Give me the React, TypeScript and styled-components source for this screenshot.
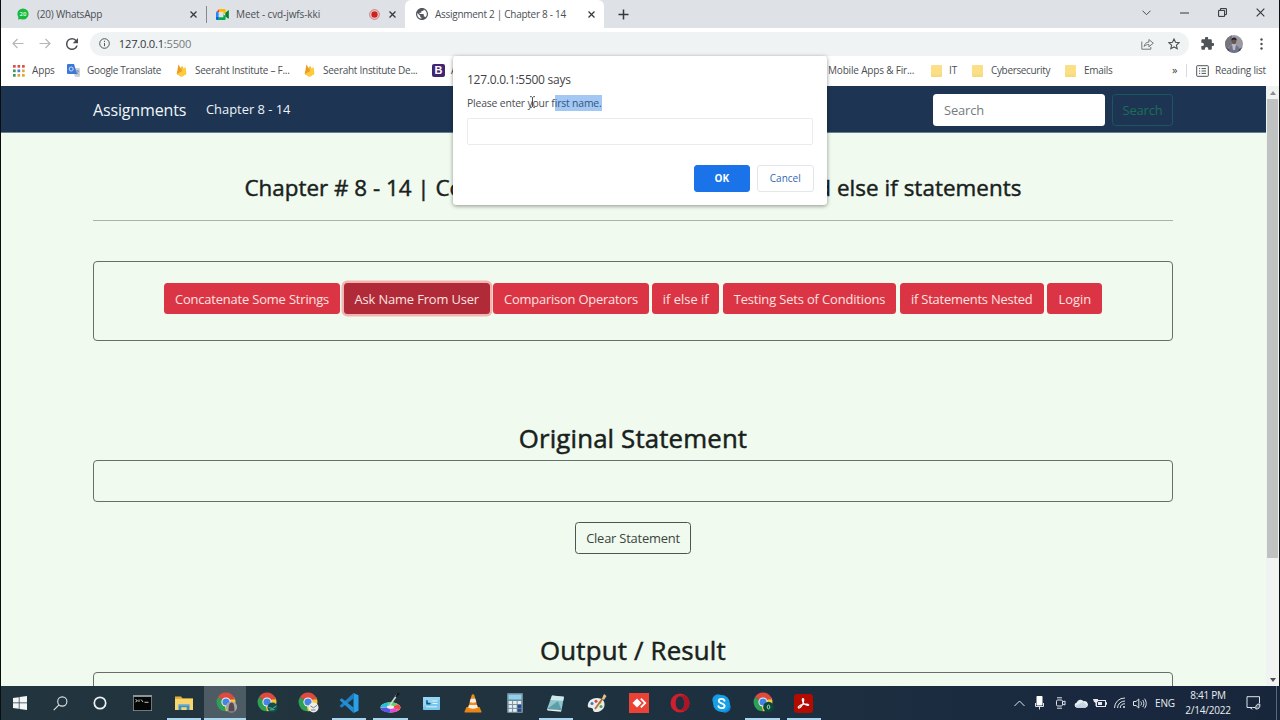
import React from 'react';
import styled, { createGlobalStyle, css } from 'styled-components';

const GlobalStyle = createGlobalStyle`
  *, *::before, *::after { box-sizing: border-box; }
  html, body { margin: 0; padding: 0; overflow: hidden; }
  body { font-family: 'Open Sans', 'Noto Sans', sans-serif; color: #212529; }
  svg { display: block; flex: none; }
`;

const Screen = styled.div`
  width: 1280px;
  height: 720px;
  display: flex;
  flex-direction: column;
  background: #fff;
  position: relative;
  overflow: hidden;
`;

const Window = styled.div`
  height: 686px;
  display: flex;
  flex-direction: column;
  border-left: 1px solid #0b0d0e;
  border-right: 1px solid #0b0d0e;
`;

const Label = styled.span<{ $size?: number; $track?: number; $color?: string; $weight?: number }>`
  font-size: ${p => p.$size ?? 10}px;
  letter-spacing: ${p => p.$track ?? 0}px;
  color: ${p => p.$color ?? '#4b4f54'};
  font-weight: ${p => p.$weight ?? 400};
  white-space: nowrap;
  line-height: 1.3;
`;

/* ---------- tab strip ---------- */
const TabStrip = styled.div`
  height: 28px;
  flex: none;
  display: flex;
  background: #dee1e6;
`;
const Tab = styled.div<{ $w: number; $active?: boolean; $pad: number; $divider?: boolean }>`
  width: ${p => p.$w}px;
  height: 28px;
  padding: 0 9px 0 ${p => p.$pad}px;
  display: flex;
  align-items: center;
  position: relative;
  ${p => p.$active && css`background: #fff; border-radius: 6px 6px 0 0;`}
  ${p => p.$divider && css`
    padding-right: 10px;
    &::after { content: ''; position: absolute; right: 0; top: 6px; height: 17px; width: 1px; background: #868a8f; }
  `}
`;
const TabTitle = styled(Label)<{ $gap: number }>`
  margin-left: ${p => p.$gap}px;
  flex: 1;
`;
const TabEnd = styled.span`
  display: flex;
  gap: 9px;
  align-items: center;
`;
const NewTab = styled.div`
  width: 38px;
  display: flex;
  align-items: center;
  justify-content: center;
`;
const WindowControls = styled.div`
  margin-left: auto;
  display: flex;
  height: 25px;
  align-items: center;
`;
const ControlCell = styled.span`
  width: 38px;
  display: flex;
  justify-content: center;
`;

/* ---------- toolbar ---------- */
const Toolbar = styled.div`
  height: 29px;
  flex: none;
  display: flex;
  align-items: center;
  padding-top: 2px;
  padding-left: 4px;
  background: #fff;
`;
const ToolCell = styled.span<{ $w?: number }>`
  width: ${p => p.$w ?? 27}px;
  display: flex;
  justify-content: center;
  align-items: center;
`;
const AddressBar = styled.div`
  width: 1101px;
  height: 24px;
  margin-left: 4px;
  padding: 0 9px;
  border-radius: 12px;
  background: #eff3f4;
  display: flex;
  align-items: center;
`;
const Url = styled(Label)`
  margin-left: 9px;
  padding-top: 1px;
  flex: 1;
  em { font-style: normal; color: #777b80; }
`;
const AddressActions = styled.span`
  display: flex;
  gap: 14px;
  align-items: center;
`;
const Avatar = styled.span`
  width: 18px;
  height: 18px;
  border-radius: 50%;
  overflow: hidden;
`;

/* ---------- bookmarks ---------- */
const Bookmarks = styled.div`
  height: 29px;
  flex: none;
  display: flex;
  align-items: center;
  padding-left: 12px;
  padding-bottom: 2px;
  background: #fff;
`;
const Bookmark = styled.span<{ $w: number; $gap?: number }>`
  width: ${p => p.$w}px;
  flex: none;
  display: flex;
  align-items: center;
  gap: ${p => p.$gap ?? 6}px;
  white-space: nowrap;
`;
const Folder = styled.i`
  width: 11px;
  height: 12px;
  border-radius: 1px;
  background: linear-gradient(180deg, #fbe08a, #fadf85 70%, #f3d67c);
`;
const BootMark = styled.i`
  width: 13px;
  height: 13px;
  border-radius: 2px;
  background: #43246f;
  color: #fff;
  font: bold 11px/13px 'Liberation Sans', sans-serif;
  text-align: center;
`;
const VLine = styled.i`
  width: 1px;
  height: 13px;
  background: #d8dbde;
`;

/* ---------- page ---------- */
const Viewport = styled.div`
  flex: 1;
  min-height: 0;
  display: flex;
`;
const Page = styled.div`
  width: 1265px;
  background: #f0faee;
  overflow: hidden;
`;
const Navbar = styled.nav`
  height: 47px;
  padding: 1px 93px 0 92px;
  display: flex;
  align-items: center;
  background: #1d3553;
  border-bottom: 1px solid #6a7f8c;
`;
const Brand = styled(Label)`
  width: 113px;
  padding-top: 1px;
`;
const NavForm = styled.div`
  margin-left: auto;
  display: flex;
  gap: 7px;
`;
const SearchField = styled.div`
  width: 172px;
  height: 32px;
  padding: 1px 11px 0;
  display: flex;
  align-items: center;
  background: #fff;
  border-radius: 3.5px;
`;
const SearchButton = styled.div`
  width: 61px;
  height: 32px;
  padding-top: 1px;
  display: flex;
  align-items: center;
  justify-content: center;
  border: 1px solid #1c5661;
  border-radius: 3.5px;
`;
const Main = styled.main`
  width: 1080px;
  margin: 0 0 0 92px;
  display: flex;
  flex-direction: column;
`;
const Title = styled.h3`
  margin: 38px auto 0;
  width: 777px;
  height: 34px;
  display: flex;
  justify-content: space-between;
  white-space: nowrap;
  font-size: 22.4px;
  line-height: 34px;
  font-weight: 400;
  -webkit-text-stroke: 0.45px currentColor;
  color: #18211c;
`;
const TitlePart = styled.span<{ $track: number }>`
  letter-spacing: ${p => p.$track}px;
`;
const Rule = styled.hr`
  width: 100%;
  height: 1px;
  margin: 15px 0 0;
  border: 0;
  background: #a9b5aa;
`;
const Panel = styled.section<{ $h: number; $top: number }>`
  height: ${p => p.$h}px;
  margin-top: ${p => p.$top}px;
  border: 1px solid #66706a;
  border-radius: 4px;
`;
const ButtonRow = styled.div`
  display: flex;
  justify-content: center;
  gap: 3.5px;
  padding-top: 21px;
`;
const DangerButton = styled.div<{ $w: number; $active?: boolean }>`
  width: ${p => p.$w}px;
  height: 31px;
  padding-top: 1px;
  display: flex;
  align-items: center;
  justify-content: center;
  border-radius: 3.5px;
  background: #db3545;
  ${p => p.$active && css`background: #b02a38; box-shadow: 0 0 0 2.5px #f3b5b1;`}
`;
const Heading = styled.h2<{ $top: number; $track: number }>`
  margin: ${p => p.$top}px 0 0;
  height: 36px;
  line-height: 36px;
  text-align: center;
  white-space: nowrap;
  font-size: 25.8px;
  font-weight: 400;
  -webkit-text-stroke: 0.5px currentColor;
  letter-spacing: ${p => p.$track}px;
  color: #18211c;
`;
const OutlineButton = styled.div`
  width: 116px;
  height: 32px;
  margin: 20px auto 0;
  padding-top: 1px;
  display: flex;
  align-items: center;
  justify-content: center;
  border: 1px solid #4c5650;
  border-radius: 3.5px;
`;
const ScrollTrack = styled.div`
  width: 13px;
  flex: none;
  background: #f1f2f2;
  display: flex;
  flex-direction: column;
  align-items: center;
  justify-content: space-between;
  padding: 5px 0 4px;
`;
const ScrollThumb = styled.div`
  width: 11px;
  height: 459px;
  margin: 4px 0 auto;
  background: #c0c2c1;
`;

/* ---------- dialog ---------- */
const Dialog = styled.div`
  position: absolute;
  left: 453px;
  top: 56px;
  width: 374px;
  height: 149px;
  padding: 15px 14px 13.5px;
  background: #fff;
  border-radius: 3px;
  box-shadow: 0 1px 4px rgba(0, 0, 0, 0.42);
  display: flex;
  flex-direction: column;
`;
const DialogLine = styled.div<{ $h: number; $drop?: number }>`
  height: ${p => p.$h}px;
  padding-top: ${p => p.$drop ?? 0}px;
  display: flex;
  align-items: center;
`;
const Selected = styled.span`
  background: #a3c8f4;
  color: #35557f;
  padding: 1px 0;
`;
const PromptInput = styled.div`
  height: 27px;
  border: 1px solid #e9ebee;
  border-radius: 2px;
`;
const DialogActions = styled.div`
  margin: auto -0.5px 0 0;
  display: flex;
  justify-content: flex-end;
  gap: 7px;
`;
const DialogButton = styled.div<{ $primary?: boolean }>`
  width: 56.5px;
  height: 27px;
  display: flex;
  align-items: center;
  justify-content: center;
  border-radius: 3px;
  border: 1px solid ${p => (p.$primary ? '#1a73e8' : '#e3e6ea')};
  background: ${p => (p.$primary ? '#1a73e8' : '#fff')};
`;
const TextCursor = styled.svg`
  position: absolute;
  left: 76px;
  top: 40px;
`;

/* ---------- taskbar ---------- */
const Taskbar = styled.footer`
  height: 34px;
  flex: none;
  display: flex;
  border-left: 1px solid #0b0d0e;
  background: linear-gradient(90deg, #22353e 0%, #21343e 30%, #1c2f40 62%, #19283e 85%, #18263c 100%);
`;
const TaskCell = styled.span<{ $w?: number; $open?: boolean; $focus?: boolean }>`
  width: ${p => p.$w ?? 41.35}px;
  height: 34px;
  display: flex;
  align-items: center;
  justify-content: center;
  position: relative;
  ${p => p.$focus && css`background: #4d5c64;`}
  ${p => (p.$open || p.$focus) && css`
    &::after {
      content: '';
      position: absolute;
      bottom: 0;
      left: ${p.$focus ? 0 : 3.5}px;
      right: ${p.$focus ? 0 : 3.5}px;
      height: 2px;
      background: #a9d5ef;
    }
  `}
`;
const ChromeSvg = styled.svg`
  margin-left: 3px;
`;
const Tray = styled.div`
  margin-left: auto;
  display: flex;
  align-items: center;
`;
const TrayCell = styled.span<{ $w: number }>`
  width: ${p => p.$w}px;
  display: flex;
  justify-content: center;
`;
const Clock = styled.span`
  width: 44px;
  margin-left: 6px;
  display: flex;
  flex-direction: column;
  align-items: center;
  gap: 2px;
`;
const DesktopEdge = styled.i`
  width: 4px;
  height: 34px;
  border-left: 1px solid #5b6778;
`;

/* ---------- icons ---------- */
const Cross = ({ size = 7, color = '#33373b', w = 1.4 }) => (
  <svg width={size} height={size} viewBox="0 0 8 8" stroke={color} strokeWidth={w} fill="none">
    <path d="M.6.6l6.8 6.8M7.4.6L.6 7.4" />
  </svg>
);
const WhatsAppIcon = () => (
  <svg width="12" height="12" viewBox="0 0 12 12">
    <circle cx="6" cy="6" r="5.6" fill="#19b83f" />
    <path d="M1 11.5l.6-3 2.3 2.4z" fill="#19b83f" />
    <text x="6" y="8.3" fontSize="6" textAnchor="middle" fill="#c9f5cf" fontWeight="700">20</text>
  </svg>
);
const MeetIcon = () => (
  <svg width="13" height="11" viewBox="0 0 13 11">
    <path d="M0 3.2L3.2 0v3.2z" fill="#ea4335" />
    <path d="M0 3.2h2.6v4.9H0z" fill="#2684fc" />
    <path d="M0 8h2.8v3H1a1 1 0 0 1-1-1z" fill="#0066da" />
    <path d="M3 0h5.6a1 1 0 0 1 1 1v3L7.4 5.6V2.8H3z" fill="#ffba00" />
    <path d="M2.8 8.2h4.6V5.4l2.2 1.6v3a1 1 0 0 1-1 1H2.8z" fill="#00ac47" />
    <path d="M9.3 4L12 1.5c.4-.3.8-.1.8.3v7.4c0 .4-.4.6-.8.3L9.3 7.2z" fill="#00832d" />
  </svg>
);
const RecordIcon = () => (
  <svg width="11" height="11" viewBox="0 0 11 11">
    <circle cx="5.5" cy="5.5" r="4.8" fill="none" stroke="#d8605c" strokeWidth=".9" />
    <circle cx="5.5" cy="5.5" r="3.2" fill="#cf2320" />
  </svg>
);
const GlobeIcon = () => (
  <svg width="12" height="12" viewBox="2 2 20 20" fill="#53575c">
    <path d="M12 2C6.48 2 2 6.48 2 12s4.48 10 10 10 10-4.48 10-10S17.52 2 12 2zm-1 17.93c-3.95-.49-7-3.85-7-7.93 0-.62.08-1.21.21-1.79L9 15v1c0 1.1.9 2 2 2v1.93zm6.9-2.54c-.26-.81-1-1.39-1.9-1.39h-1v-3c0-.55-.45-1-1-1H8v-2h2c.55 0 1-.45 1-1V7h2c1.1 0 2-.9 2-2v-.41c2.93 1.19 5 4.06 5 7.41 0 2.08-.8 3.97-2.1 5.39z" />
  </svg>
);
const PlusIcon = () => (
  <svg width="11" height="11" viewBox="0 0 11 11" stroke="#34383c" strokeWidth="1.5"><path d="M5.5 .5v10M.5 5.5h10" /></svg>
);
const ArrowIcon = ({ flip = false }) => (
  <svg width="12" height="11" viewBox="0 0 12 11" fill="none" stroke="#b3b7ba" strokeWidth="1.2">
    <path d={flip ? 'M.5 5.5h10.5M6.5 1l4.5 4.5L6.5 10' : 'M11.5 5.5H1M5.5 1L1 5.5 5.5 10'} />
  </svg>
);
const ReloadIcon = () => (
  <svg width="12" height="12" viewBox="4 4 16 16" fill="#4a4e52">
    <path d="M17.65 6.35A7.96 7.96 0 0 0 12 4a8 8 0 1 0 7.73 10h-2.08A6 6 0 1 1 12 6c1.66 0 3.14.69 4.22 1.78L13 11h7V4l-2.35 2.35z" />
  </svg>
);
const InfoIcon = () => (
  <svg width="11" height="11" viewBox="0 0 11 11" fill="none" stroke="#54585c" strokeWidth="1">
    <circle cx="5.5" cy="5.5" r="4.8" /><path d="M5.5 5v3.2M5.5 2.8v1.2" />
  </svg>
);
const ShareIcon = () => (
  <svg width="13" height="12" viewBox="0 0 13 12" fill="none" stroke="#74787c" strokeWidth="1">
    <path d="M.8 3.5v7.7h9V9M3.2 8.5c.3-2.8 2-4.3 4.700-4.400V1.500l4.400 3.700-4.400 3.600V6.500C5.800 6.500 4.300 7 3.200 8.500z" />
  </svg>
);
const StarIcon = () => (
  <svg width="12" height="12" viewBox="0 0 12 12" fill="none" stroke="#4d5155" strokeWidth="1.1">
    <path d="M6 1l1.5 3.3 3.600.4-2.700 2.400.8 3.600L6 8.900l-3.200 1.800.8-3.600L.9 4.700l3.600-.4z" />
  </svg>
);
const PuzzleIcon = () => (
  <svg width="13" height="13" viewBox="1.5 1.5 21 21" fill="#505458">
    <path d="M20.500 11H19V7c0-1.100-.9-2-2-2h-4V3.500a2.500 2.500 0 0 0-5 0V5H4c-1.100 0-2 .9-2 2v3.800h1.500a2.700 2.700 0 0 1 0 5.400H2V20c0 1.100.9 2 2 2h3.800v-1.500a2.700 2.700 0 0 1 5.400 0V22H17c1.100 0 2-.9 2-2v-4h1.500a2.500 2.500 0 0 0 0-5z" />
  </svg>
);
const AvatarPicture = () => (
  <svg width="18" height="18" viewBox="0 0 18 18">
    <rect width="18" height="18" fill="#9a98a0" />
    <path d="M0 0h7v9L2 14H0z" fill="#77747c" />
    <path d="M3 18c0-5 2-8 6-8s6 3 6 8z" fill="#6f7388" />
    <path d="M7 9h4l-1 6H8z" fill="#b9bccb" />
    <ellipse cx="9" cy="6.3" rx="2.3" ry="3" fill="#6b5654" />
    <path d="M6.300 5.500C6.300 1.500 12 1.500 11.700 5.500L9 4.500z" fill="#221f25" />
    <path d="M0 12l4 2 1 4H0zM14 14l4-2v6h-5z" fill="#4b4a57" />
  </svg>
);
const DotsIcon = () => (
  <svg width="3" height="12" viewBox="0 0 3 12" fill="#4b4f53">
    <circle cx="1.5" cy="1.5" r="1.2" /><circle cx="1.5" cy="6" r="1.2" /><circle cx="1.5" cy="10.5" r="1.2" />
  </svg>
);
const appColors = ['#d9534a', '#d9534a', '#d9534a', '#3f9a5a', '#4a7dd0', '#e0a63a', '#3f9a5a', '#e0a63a', '#e0a63a'];
const AppsIcon = () => (
  <svg width="12" height="12" viewBox="0 0 12 12">
    {appColors.map((c, i) => <rect key={i} x={(i % 3) * 4.5} y={Math.floor(i / 3) * 4.5} width="2.7" height="2.7" fill={c} />)}
  </svg>
);
const TranslateIcon = () => (
  <svg width="13" height="13" viewBox="0 0 13 13">
    <path d="M5 4h7a1 1 0 0 1 1 1v7a1 1 0 0 1-1 1H8z" fill="#cfd3d8" />
    <path d="M1 0h6l3 10H1a1 1 0 0 1-1-1V1a1 1 0 0 1 1-1z" fill="#3b78d8" />
    <circle cx="4.2" cy="5" r="2" fill="none" stroke="#dce8fb" strokeWidth=".9" />
    <path d="M8.500 7h3.500M10.200 6v1M11.500 7c-.4 1.700-1.400 2.700-2.500 3.300M9.200 8.300l2.300 2.200" stroke="#5d7fb5" strokeWidth=".7" fill="none" />
  </svg>
);
const FirebaseIcon = () => (
  <svg width="11" height="13" viewBox="0 0 11 13">
    <path d="M.7 10L5.800 2.200c.2-.3.500-.3.700 0L10.300 10l-4.200 2.600c-.4.2-.8.2-1.200 0z" fill="#fbc02d" />
    <path d="M.7 10l5.100-4L9 3.300c.3-.2.600-.1.700.2l.7 6.500-4.300 2.600c-.4.2-.8.2-1.200 0z" fill="#fccb3f" />
    <path d="M2.500.6l3.900 6.500L.7 10z" fill="#ef9b20" />
  </svg>
);
const ReadingIcon = () => (
  <svg width="13" height="12" viewBox="0 0 13 12" fill="none" stroke="#505458" strokeWidth="1">
    <rect x=".7" y=".7" width="11.6" height="10.6" rx=".6" />
    <path d="M3 3.600h1.200M3 6h1.200M3 8.400h1.200M5.500 3.600H10M5.500 6H10M5.500 8.400H10" />
  </svg>
);
const ChromeIcon = ({ badge }: { badge: string }) => (
  <ChromeSvg width="22" height="22" viewBox="0 0 22 22">
    <path d="M10 10L1.900 5.300A9.300 9.300 0 0 1 18.100 5.300z" fill="#dd4b3e" />
    <path d="M10 10L1.900 5.300A9.300 9.300 0 0 0 10 19.300z" fill="#2f9f55" />
    <path d="M10 10L18.100 5.300A9.300 9.300 0 0 1 10 19.300l-1-4z" fill="#f5c83c" />
    <path d="M10 5.600h8.200l.7 2h-9z" fill="#dd4b3e" />
    <circle cx="10" cy="10" r="4.6" fill="#f3f4f2" />
    <circle cx="10" cy="10" r="3.6" fill="#4484e6" />
    {badge === 'photo' && <><circle cx="15.5" cy="15" r="5.6" fill="#a7a4a8" /><path d="M12.500 19.500c0-6 1-9 3-9s3 3 3 9z" fill="#574b50" /></>}
    {badge === 'teal' && <><circle cx="15.5" cy="15.5" r="5" fill="#134f4c" /><path d="M11.500 15.500l4 1 4-2.500M12.500 18l5-.5" stroke="#4fb6a0" fill="none" /></>}
    {badge === 'note' && <><circle cx="15.5" cy="15.5" r="5" fill="#eceded" /><path d="M12.500 14l3 1.800 3.500-2.500M13 18h4.500" stroke="#7b8084" fill="none" /></>}
    {badge === 'zero' && <><circle cx="15.5" cy="15" r="5.3" fill="#084a36" /><ellipse cx="15.5" cy="15" rx="1.3" ry="1.9" stroke="#bfe0d2" fill="none" strokeWidth=".9" /></>}
  </ChromeSvg>
);

const StartIcon = () => <svg width="14" height="14" viewBox="0 0 14 14" fill="#f3f6f7"><path d="M0 2l5.800-.8v5.400H0zM6.500 1.100L14 0v6.600H6.500zM0 7.300h5.800v5.400L0 12zM6.500 7.300H14V14l-7.500-1.100z" /></svg>;
const MagnifyIcon = () => <svg width="15" height="15" viewBox="0 0 15 15" fill="none" stroke="#dfe4e6" strokeWidth="1.1"><circle cx="9.3" cy="5.5" r="4.6" /><path d="M6 8.900L.7 14.200" /></svg>;
const CortanaIcon = () => <svg width="14" height="14" viewBox="0 0 14 14" fill="none" stroke="#eef1f2" strokeWidth="1.7"><circle cx="7" cy="7" r="5.7" /></svg>;
const TerminalIcon = () => (
  <svg width="19" height="16" viewBox="0 0 19 16"><rect width="19" height="16" fill="#8d9599" /><rect x=".8" y="2" width="17.4" height="13.2" fill="#050606" /><path d="M2.500 4.500l2 1.200-2 1.200M6 4.500v2.500M8 4.500l2 2.500M11.500 7.300h4" stroke="#dadddd" fill="none" strokeWidth=".9" /></svg>
);
const ExplorerIcon = () => (
  <svg width="18" height="16" viewBox="0 0 18 16"><path d="M0 1.500h6l1.500 1.700H18V15H0z" fill="#e2b13c" /><path d="M0 4h18v11H0z" fill="#f8d66d" /><path d="M3.500 15V9.500h11V15h-2.800v-2.800H6.300V15z" fill="#3d8fc6" /><path d="M3.500 9.500h11v1.200h-11z" fill="#6cb6de" /></svg>
);
const CodeIcon = () => (
  <svg width="20" height="20" viewBox="0 0 20 20"><path d="M14.500 0L19.500 2.200v15.600L14.500 20z" fill="#2aa0ea" /><path d="M14.500 0v5.500L2.700 14.700.5 13z" fill="#1f7fc4" /><path d="M14.500 20v-5.500L2.700 5.300.5 7z" fill="#238ed6" /></svg>
);
const PaletteDiscIcon = () => (
  <svg width="21" height="20" viewBox="0 0 21 20"><ellipse cx="10.5" cy="14.5" rx="10" ry="5" fill="#f4f4f4" /><path d="M10.500 14.500L.5 14c.5-2.600 3.500-4 7-4.400z" fill="#24c4d8" /><path d="M10.500 14.500l-3-4.900c4-.6 8 0 10.500 1.600z" fill="#50d66a" /><path d="M10.500 14.500l7.500-3.300c3 2 3.300 4 1 5.800z" fill="#f04a4a" /><path d="M10.500 14.500L19 17c-2 2-5.500 2.600-9 2.500z" fill="#e24ad0" /><path d="M10.500 14.500l-.5 5C5 19.500 1 18 .5 14.500z" fill="#5a54e6" /><ellipse cx="10.5" cy="14" rx="3.6" ry="1.8" fill="#f5efe9" /><path d="M10 12l7-10" stroke="#cdd3d6" strokeWidth="1.7" /><path d="M16 4l3-4" stroke="#15191b" strokeWidth="2" /></svg>
);
const CardIcon = () => (
  <svg width="17" height="13" viewBox="0 0 17 13"><rect width="17" height="13" rx=".8" fill="#79c7ee" /><path d="M0 0h17v2L0 10z" fill="#a4dcf7" opacity=".7" /><path d="M4 3.300v3.300h3.500" stroke="#0e567f" strokeWidth="1.6" fill="none" /><path d="M9.500 4h5M9.500 6.500h5M3 9.800h11" stroke="#ddf4fd" strokeWidth="1" /></svg>
);
const ConeIcon = () => (
  <svg width="18" height="19" viewBox="0 0 18 19"><path d="M2.500 13h13l2 4.500c.2.600-.2 1-.8 1H1.300c-.6 0-1-.4-.8-1z" fill="#e98514" /><path d="M7.800.8c.3-.7 2.100-.7 2.400 0L14 14.300c-2 1.600-8 1.600-10 0z" fill="#f08c1a" /><path d="M6.700 4.700h4.600l1 3.400c-1.600.8-5 .8-6.600 0z" fill="#f3eee8" /><path d="M5 11h8l.8 2.600c-2 1.400-7.600 1.400-9.600 0z" fill="#f3eee8" /></svg>
);
const CalcIcon = () => (
  <svg width="16" height="20" viewBox="0 0 16 20"><rect width="16" height="20" rx="1" fill="#6f8797" /><rect x="1.5" y="1.5" width="13" height="5" fill="#8fd0ea" />{[0, 1, 2].flatMap(r => [0, 1, 2].map(c => <rect key={`${r}${c}`} x={1.6 + c * 4.5} y={8 + r * 3.9} width="3.6" height="3" fill={c === 2 && r > 0 ? '#234a8e' : '#e4edf2'} />))}</svg>
);
const NotepadIcon = () => (
  <svg width="19" height="19" viewBox="0 0 19 19"><path d="M6 1.500l12 1.300-2.500 13.500L1 15z" fill="#8fc6cd" /><path d="M6 1.500l12 1.300-.8 4L4.500 6z" fill="#cfe9ea" /><path d="M1 15l11-8 3.500 9.300z" fill="#5f9ea8" /><path d="M1 15l14.500 1.300-.5 1.500L1.500 16.500z" fill="#e5efee" /></svg>
);
const PaintIcon = () => (
  <svg width="20" height="19" viewBox="0 0 20 19"><path d="M10 4c5 0 8 3 7.500 7.200C17 16 12 18.500 8 18c-2.500-.4-1.400-3-3-3.700C3 13.500.8 14.500.8 11.500.8 7 5 4 10 4z" fill="#e9ecec" /><circle cx="5" cy="9.5" r="1.5" fill="#3f75ba" /><circle cx="9" cy="7.2" r="1.5" fill="#cf493c" /><circle cx="13" cy="8.5" r="1.4" fill="#e6b133" /><circle cx="14" cy="12.5" r="1.5" fill="#55a34d" /><path d="M8 15l8-11" stroke="#b9702f" strokeWidth="1.8" /><path d="M15 4.500L17 0l2.500 2-2.500 4z" fill="#dfc58e" /></svg>
);
const AnyDeskIcon = () => (
  <svg width="20" height="20" viewBox="0 0 20 20"><rect width="20" height="20" fill="#ec4236" /><path d="M3.500 10L8 5.500l4.500 4.500L8 14.500z" fill="#fff" /><path d="M11.200 6.200l1.300-1.200 5 5-5 5-1.300-1.200 3.800-3.800z" fill="#fff" /></svg>
);
const OperaIcon = () => (
  <svg width="20" height="20" viewBox="0 0 20 20"><path fillRule="evenodd" d="M10 .5a9.500 9.500 0 1 0 0 19 9.500 9.500 0 0 0 0-19zM10 3.200c2.500 0 4.300 3 4.300 6.800s-1.800 6.800-4.300 6.800S5.700 13.800 5.700 10 7.500 3.200 10 3.200z" fill="#cf1f2f" /><path d="M10 3.200c5.700 0 5.700 13.600 0 13.600 2 1.500 5 1 6.500-.4 4-3.600 4-9.200 0-12.800C14.500 2 12 1.800 10 3.200z" fill="#a81626" /></svg>
);
const SkypeIcon = () => (
  <svg width="19" height="19" viewBox="0 0 19 19"><circle cx="6" cy="6" r="5.7" fill="#1796df" /><circle cx="13" cy="13" r="5.7" fill="#1686d4" /><circle cx="9.5" cy="9.5" r="8.4" fill="#15a1e8" /><path d="M12.500 6.700C11.800 4.300 6.800 4.200 6.800 7c0 2.900 5.800 1.800 5.800 5 0 3-5.700 2.700-6.200.1" fill="none" stroke="#fff" strokeWidth="1.9" strokeLinecap="round" /></svg>
);
const AcrobatIcon = () => (
  <svg width="19" height="19" viewBox="0 0 19 19"><rect width="19" height="19" rx="3" fill="#b30b00" /><path d="M4.300 13.700c-.7-1 2-2.700 4-3.200 2.200-.6 6-.9 6.300.3.400 1.200-3.300.5-4.900-1.400C8.300 7.700 7.800 4.500 9 4.500s.8 3-.3 5.500c-1.200 2.500-3.500 5-4.400 3.700z" fill="none" stroke="#fff" strokeWidth="1.2" /></svg>
);

const line = { fill: 'none', stroke: '#dfe4ea', strokeWidth: 1 };
const ChevronUp = () => <svg width="11" height="7" viewBox="0 0 11 7" {...line}><path d="M.5 6l5-5 5 5" /></svg>;
const MicIcon = () => <svg width="9" height="14" viewBox="0 0 9 14"><rect x="1.5" width="6" height="9.5" rx=".8" fill="#fff" /><path d="M.5 7v3.500h8V7M4.500 10.500v3" fill="none" stroke="#dce1e6" strokeWidth="1" /></svg>;
const CameraIcon = () => <svg width="11" height="12" viewBox="0 0 11 12" {...line}><rect x="1.5" y="3" width="6" height="6" rx="1.2" /><path d="M7.500 5l2.500-1v4L7.500 7M2 .8h5M2 11.200h5" /></svg>;
const CloudIcon = () => <svg width="14" height="9" viewBox="0 0 14 9"><path d="M3 8.800a2.700 2.700 0 0 1-.3-5.300A4 4 0 0 1 9.700 2.200 3.300 3.300 0 0 1 11.300 8.800z" fill="#e9eef3" /><path d="M1 7l8-4 4 3.500-1.700 2.300H3z" fill="#c6d6e4" /></svg>;
const BatteryIcon = () => <svg width="14" height="10" viewBox="0 0 14 10"><rect x="3.5" y="2.5" width="9" height="6" fill="none" stroke="#e6eaee" /><path d="M5 4h4v3H5zM12.800 4.200H14v2.600h-1.200zM0 1h5v2.500L3.500 5v3h-1V5L.8 3.500z" fill="#e6eaee" /></svg>;
const WifiIcon = () => <svg width="12" height="12" viewBox="0 0 12 12" {...line}><path d="M.5 11A10 10 0 0 1 11 1M3.500 11A7.300 7.300 0 0 1 11 4M6.200 11A4.600 4.600 0 0 1 11 6.800" /><circle cx="10" cy="10" r="1" fill="#dfe4ea" stroke="none" /></svg>;
const VolumeIcon = () => <svg width="14" height="11" viewBox="0 0 14 11" {...line}><path d="M.5 3.500H3L5.800 1v9L3 7.500H.5zM7.800 3.500c.9 1.200.9 2.800 0 4M9.700 2c1.600 2 1.600 5 0 7M11.500.7c2.300 2.800 2.300 6.800 0 9.600" /></svg>;
const NoticeIcon = () => <svg width="15" height="14" viewBox="0 0 15 14" {...line}><path d="M9 11.500H6.500H1V.7h12.500v6.500M4 11.500l2.300 1.800" /><path d="M13.800 8c-3-.3-4.500 1.500-4 5 3 .2 4.500-1.500 4-5z" fill="#dfe4ea" fillOpacity=".3" /></svg>;

const dangerButtons = [
  { text: 'Concatenate Some Strings', w: 176.5, track: -0.15 },
  { text: 'Ask Name From User', w: 146, track: -0.14, active: true },
  { text: 'Comparison Operators', w: 155.5, track: -0.2 },
  { text: 'if else if', w: 67, track: 0 },
  { text: 'Testing Sets of Conditions', w: 173.5, track: -0.13 },
  { text: 'if Statements Nested', w: 144, track: -0.2 },
  { text: 'Login', w: 55, track: 0 },
];

const tasks: { icon: React.ReactNode; open?: boolean; focus?: boolean }[] = [
  { icon: <TerminalIcon /> },
  { icon: <ExplorerIcon />, open: true },
  { icon: <ChromeIcon badge="photo" />, focus: true },
  { icon: <ChromeIcon badge="teal" /> },
  { icon: <ChromeIcon badge="note" /> },
  { icon: <CodeIcon />, open: true },
  { icon: <PaletteDiscIcon />, open: true },
  { icon: <CardIcon /> },
  { icon: <ConeIcon /> },
  { icon: <CalcIcon /> },
  { icon: <NotepadIcon />, open: true },
  { icon: <PaintIcon /> },
  { icon: <AnyDeskIcon /> },
  { icon: <OperaIcon /> },
  { icon: <SkypeIcon /> },
  { icon: <ChromeIcon badge="zero" />, open: true },
  { icon: <AcrobatIcon />, open: true },
];

export default function App() {
  return (
    <>
      <GlobalStyle />
      <Screen>
        <Window>
          <TabStrip>
            <Tab $w={206} $pad={16} $divider>
              <WhatsAppIcon />
              <TabTitle $gap={8} $track={-0.2}>(20) WhatsApp</TabTitle>
              <TabEnd><Cross /></TabEnd>
            </Tab>
            <Tab $w={198} $pad={9}>
              <MeetIcon />
              <TabTitle $gap={7} $track={-0.1}>Meet - cvd-jwfs-kki</TabTitle>
              <TabEnd><RecordIcon /><Cross /></TabEnd>
            </Tab>
            <Tab $w={199} $pad={11} $active>
              <GlobeIcon />
              <TabTitle $gap={7} $track={-0.28}>Assignment 2 | Chapter 8 - 14</TabTitle>
              <TabEnd><Cross /></TabEnd>
            </Tab>
            <NewTab><PlusIcon /></NewTab>
            <WindowControls>
              <ControlCell><svg width="9" height="6" viewBox="0 0 9 6" fill="none" stroke="#4b4f53"><path d="M.5.7l4 4 4-4" /></svg></ControlCell>
              <ControlCell><svg width="9" height="2" viewBox="0 0 9 2"><path d="M0 .5h9v1H0z" fill="#34383c" /></svg></ControlCell>
              <ControlCell><svg width="9" height="9" viewBox="0 0 9 9" fill="none" stroke="#2d3134"><path d="M.6 2.400h6v6h-6zM2.400 2.200V.6h6v6H6.800" /></svg></ControlCell>
              <ControlCell><Cross size={9} w={1} /></ControlCell>
            </WindowControls>
          </TabStrip>
          <Toolbar>
            <ToolCell><ArrowIcon /></ToolCell>
            <ToolCell><ArrowIcon flip /></ToolCell>
            <ToolCell><ReloadIcon /></ToolCell>
            <AddressBar>
              <InfoIcon />
              <Url $size={11.2} $color="#33373b" $track={-0.25}>127.0.0.1<em>:5500</em></Url>
              <AddressActions><ShareIcon /><StarIcon /></AddressActions>
            </AddressBar>
            <ToolCell $w={36}><PuzzleIcon /></ToolCell>
            <ToolCell $w={18}><Avatar><AvatarPicture /></Avatar></ToolCell>
            <ToolCell $w={36}><DotsIcon /></ToolCell>
          </Toolbar>
          <Bookmarks>
            <Bookmark $w={54} $gap={7}><AppsIcon /><Label $track={-0.15}>Apps</Label></Bookmark>
            <Bookmark $w={109} $gap={7}><TranslateIcon /><Label $track={-0.3}>Google Translate</Label></Bookmark>
            <Bookmark $w={128} $gap={8}><FirebaseIcon /><Label $track={-0.25}>Seeraht Institute – F...</Label></Bookmark>
            <Bookmark $w={128} $gap={8}><FirebaseIcon /><Label $track={-0.27}>Seeraht Institute De...</Label></Bookmark>
            <Bookmark $w={378}><BootMark>B</BootMark><Label>A</Label></Bookmark>
            <Bookmark $w={121} $gap={7}><Folder /><Label $track={-0.18}>Mobile Apps &amp; Fir...</Label></Bookmark>
            <Bookmark $w={41} $gap={7}><Folder /><Label>IT</Label></Bookmark>
            <Bookmark $w={93} $gap={8}><Folder /><Label $track={-0.35}>Cybersecurity</Label></Bookmark>
            <Bookmark $w={107} $gap={8}><Folder /><Label $track={-0.3}>Emails</Label></Bookmark>
            <Bookmark $w={14}><Label $size={11} $color="#33373b">»</Label></Bookmark>
            <Bookmark $w={10}><VLine /></Bookmark>
            <Bookmark $w={74} $gap={6}><ReadingIcon /><Label $track={-0.22}>Reading list</Label></Bookmark>
          </Bookmarks>
          <Viewport>
            <Page>
              <Navbar>
                <Brand $size={16} $color="#f0f5f8" $track={-0.15}>Assignments</Brand>
                <Label $size={12.9} $color="#eef3f7">Chapter 8 - 14</Label>
                <NavForm>
                  <SearchField><Label $size={12.9} $color="#757b80" $track={-0.15}>Search</Label></SearchField>
                  <SearchButton><Label $size={12.9} $color="#1b6f57" $track={-0.15}>Search</Label></SearchButton>
                </NavForm>
              </Navbar>
              <Main>
                <Title>
                  <TitlePart $track={0}>Chapter # 8 - 14 | Concatenation, if, else</TitlePart>
                  <TitlePart $track={0.05}>and else if statements</TitlePart>
                </Title>
                <Rule />
                <Panel $h={80} $top={40}>
                  <ButtonRow>
                    {dangerButtons.map(b => (
                      <DangerButton key={b.text} $w={b.w} $active={b.active}>
                        <Label $size={12.9} $track={b.track} $color="#fde3e1">{b.text}</Label>
                      </DangerButton>
                    ))}
                  </ButtonRow>
                </Panel>
                <Heading $top={79} $track={0.15}>Original Statement</Heading>
                <Panel $h={42} $top={4} />
                <OutlineButton><Label $size={12.9} $track={-0.2} $color="#3b443f">Clear Statement</Label></OutlineButton>
                <Heading $top={78} $track={0.2}>Output / Result</Heading>
                <Panel $h={42} $top={4} />
              </Main>
            </Page>
            <ScrollTrack>
              <svg width="6" height="4" viewBox="0 0 6 4"><path d="M0 4l3-4 3 4z" fill="#8b8e90" /></svg>
              <ScrollThumb />
              <svg width="6" height="4" viewBox="0 0 6 4"><path d="M0 0h6L3 4z" fill="#4b4e50" /></svg>
            </ScrollTrack>
          </Viewport>
        </Window>

        <Taskbar>
          <TaskCell $w={38}><StartIcon /></TaskCell>
          <TaskCell $w={42}><MagnifyIcon /></TaskCell>
          <TaskCell $w={38}><CortanaIcon /></TaskCell>
          <TaskCell $w={2.8} />
          {tasks.map((t, i) => <TaskCell key={i} $open={t.open} $focus={t.focus}>{t.icon}</TaskCell>)}
          <Tray>
            <TrayCell $w={19}><ChevronUp /></TrayCell>
            <TrayCell $w={21}><MicIcon /></TrayCell>
            <TrayCell $w={21}><CameraIcon /></TrayCell>
            <TrayCell $w={19}><CloudIcon /></TrayCell>
            <TrayCell $w={20}><BatteryIcon /></TrayCell>
            <TrayCell $w={20}><WifiIcon /></TrayCell>
            <TrayCell $w={20}><VolumeIcon /></TrayCell>
            <TrayCell $w={30}><Label $size={10} $color="#e9edf1" $track={-0.15}>ENG</Label></TrayCell>
            <Clock>
              <Label $size={10} $color="#e9edf1" $track={-0.25}>8:41 PM</Label>
              <Label $size={10} $color="#e9edf1" $track={-0.2}>2/14/2022</Label>
            </Clock>
            <TrayCell $w={46}><NoticeIcon /></TrayCell>
            <DesktopEdge />
          </Tray>
        </Taskbar>

        <Dialog>
          <DialogLine $h={17}><Label $size={12} $track={-0.25} $color="#3f4347">127.0.0.1:5500 says</Label></DialogLine>
          <DialogLine $h={30} $drop={2}><Label $size={10.4} $track={-0.17} $color="#4a4e52">Please enter your f<Selected>irst name.</Selected></Label></DialogLine>
          <PromptInput />
          <DialogActions>
            <DialogButton $primary><Label $color="#fff" $weight={700}>OK</Label></DialogButton>
            <DialogButton><Label $color="#3367b5">Cancel</Label></DialogButton>
          </DialogActions>
          <TextCursor width="7" height="12" viewBox="0 0 7 12" fill="none" stroke="#4a4e52" strokeWidth="1">
            <path d="M1 .7h1.500l1 .8 1-.8H6M3.500 1.500v9M1 11.300h1.500l1-.8 1 .8H6" />
          </TextCursor>
        </Dialog>
      </Screen>
    </>
  );
}
